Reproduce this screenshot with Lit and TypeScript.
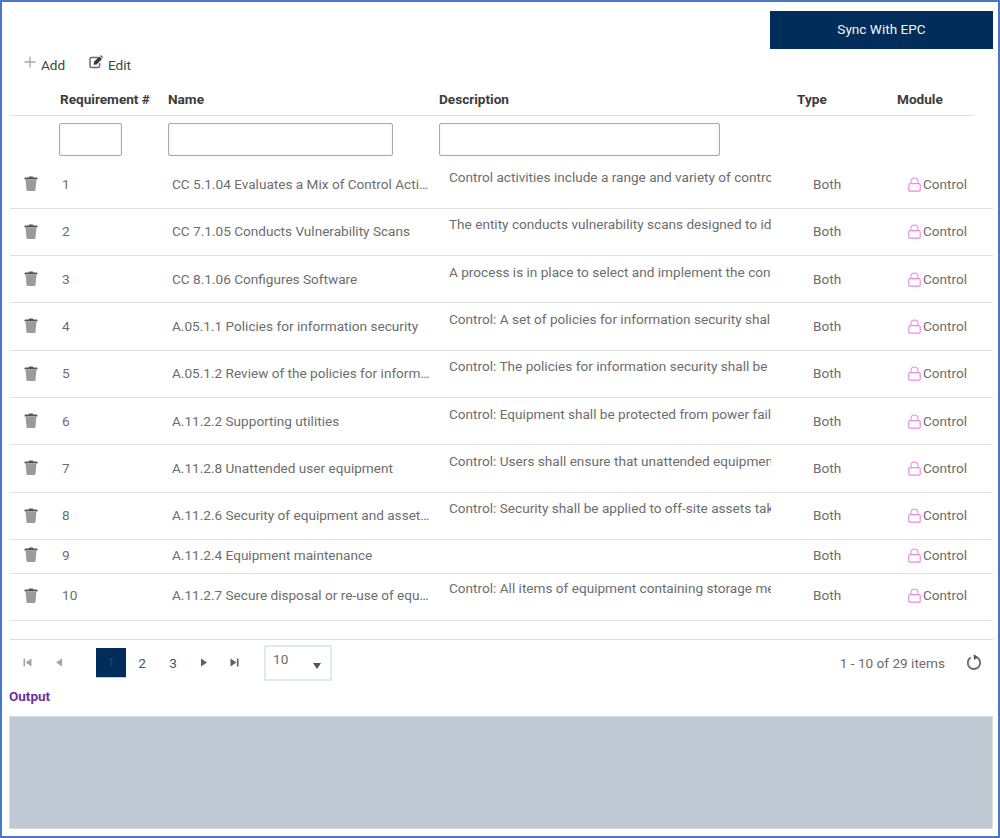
import { LitElement, html, css, svg } from "lit";
import { customElement } from "lit/decorators.js";

const rows = [
  ["1", "CC 5.1.04 Evaluates a Mix of Control Activities", "Control activities include a range and variety of controls"],
  ["2", "CC 7.1.05 Conducts Vulnerability Scans", "The entity conducts vulnerability scans designed to identify"],
  ["3", "CC 8.1.06 Configures Software", "A process is in place to select and implement the config"],
  ["4", "A.05.1.1 Policies for information security", "Control: A set of policies for information security shall"],
  ["5", "A.05.1.2 Review of the policies for information security", "Control: The policies for information security shall be"],
  ["6", "A.11.2.2 Supporting utilities", "Control: Equipment shall be protected from power failures"],
  ["7", "A.11.2.8 Unattended user equipment", "Control: Users shall ensure that unattended equipment"],
  ["8", "A.11.2.6 Security of equipment and assets off-premises", "Control: Security shall be applied to off-site assets taking"],
  ["9", "A.11.2.4 Equipment maintenance", ""],
  ["10", "A.11.2.7 Secure disposal or re-use of equipment", "Control: All items of equipment containing storage media"],
];

const trash = svg`<svg class="trash" viewBox="0 0 14 15" width="14" height="15"><path d="M0.5 2.6 Q0.5 1.6 1.6 1.6 H4.6 L5.2 0.5 H8.8 L9.4 1.6 H12.4 Q13.5 1.6 13.5 2.6 V3.4 H0.5Z" fill="#555"/><path d="M1.6 4 H12.4 L11.5 14 Q11.4 15 10.4 15 H3.6 Q2.6 15 2.5 14Z" fill="#9b9b9b"/></svg>`;
const lock = svg`<svg class="lock" viewBox="0 0 13 15" width="13" height="15"><path d="M3 7 V4.2 Q3 1 6.5 1 Q10 1 10 4.2 V7" fill="none" stroke="#ea8ae2" stroke-width="1.1"/><rect x="0.8" y="6.6" width="11.4" height="7.6" rx="1.3" fill="none" stroke="#ea8ae2" stroke-width="1.2"/></svg>`;
const first = svg`<svg viewBox="0 0 9 9" width="9" height="9"><rect x="0.5" y="0.5" width="1.6" height="8" fill="#a6a6a6"/><path d="M8.5 0.5 V8.5 L2.6 4.5Z" fill="#a6a6a6"/></svg>`;
const prev = svg`<svg viewBox="0 0 8 9" width="8" height="9"><path d="M7 0.5 V8.5 L1 4.5Z" fill="#a6a6a6"/></svg>`;
const next = svg`<svg viewBox="0 0 8 9" width="8" height="9"><path d="M1 0.5 V8.5 L7 4.5Z" fill="#5f5f5f"/></svg>`;
const last = svg`<svg viewBox="0 0 9 9" width="9" height="9"><path d="M0.5 0.5 V8.5 L6.4 4.5Z" fill="#5f5f5f"/><rect x="6.9" y="0.5" width="1.6" height="8" fill="#5f5f5f"/></svg>`;

@customElement("app-root")
export class AppRoot extends LitElement {
  static styles = css`
    :host { display: block; font-family: Roboto, "Liberation Sans", sans-serif; font-size: 13.6px; color: #6d6d6d; }
    * { box-sizing: border-box; }
    .frame { height: 838px; border: 2px solid #4a76c6; padding: 9px 5px 0 8px; overflow: hidden; display: flex; flex-direction: column; }
    .top { display: flex; justify-content: flex-end; height: 38px; }
    .sync { width: 223px; height: 38px; background: #002d59; color: #f2f5f8; display: flex; align-items: center; justify-content: center; padding-bottom: 2px; }
    .tools { display: flex; align-items: center; height: 32px; padding-left: 14px; color: #444; margin-bottom: 9px; }
    .tool { display: flex; align-items: center; }
    .add { width: 65px; gap: 5px; }
    .edit { gap: 5px; }
    .edit svg { margin-top: -7px; }
    .add svg { margin-top: -7px; }
    .head, .filters, .row { display: grid; grid-template-columns: 49px 109px 271px 358px 100px 96px; align-items: center; }
    .head { height: 26px; width: 964px; border-bottom: 1px solid #dedede; font-weight: 700; color: #3c3c3c; padding-bottom: 8px; }
    .head span:nth-child(2) { padding-left: 1px; }
    .filters { height: 45.5px; width: 964px; padding-top: 1px; padding-bottom: 0.5px; }
    input { display: block; height: 33px; border: 1px solid #a9a9a9; border-radius: 2px; background: #fff; padding: 0; outline: none; box-shadow: inset 0 0 1px #bbb; }
    .f1 { width: 63px; }
    .f2 { width: 225px; }
    .f3 { width: 281px; }
    .row { height: 47.33px; border-bottom: 1px solid #dfdfdf; padding-bottom: 1.4px; }
    .row.short { height: 34px; padding-bottom: 3.5px; }
    .row.last { padding-bottom: 4px; }
    .ico { padding-left: 14px; display: flex; }
    .num { padding-left: 3px; }
    .name { padding-left: 4px; padding-right: 8px; white-space: nowrap; overflow: hidden; text-overflow: ellipsis; }
    .desc { margin-left: 10px; width: 322px; white-space: nowrap; overflow: hidden; margin-top: -14px; }
    .type { padding-left: 16px; }
    .mod { padding-left: 11px; display: flex; align-items: center; gap: 2px; }
    .mod svg { margin-top: 1px; }
    .pager { margin-top: 17.5px; border-top: 1px solid #d3dbe3; height: 47px; display: flex; align-items: center; position: relative; }
    .pg { display: flex; align-items: center; }
    .ib { width: 31px; display: flex; justify-content: center; }
    .ib.a { margin-left: 2px; }
    .ib.b { margin-right: 22px; }
    .page { width: 31px; height: 30px; display: flex; align-items: center; justify-content: center; color: #35587c; padding-left: 1px; }
    .page.on { width: 30px; background: #002d59; color: #1d4670; border-bottom: 1px solid #c3d0dc; padding-left: 0; }
    .spacer { flex: 1; }
    .select { width: 68px; height: 36px; border: 2px solid #e1e8ee; margin-left: 14px; position: relative; padding: 4px 0 0 7px; }
    .select i { position: absolute; right: 9px; top: 16px; width: 0; height: 0; border-left: 4.5px solid transparent; border-right: 4.5px solid transparent; border-top: 6px solid #555; }
    .count { margin-right: 21px; }
    .refresh { margin-right: 11px; display: flex; }
    .out { color: #7030a0; font-weight: 700; font-size: 13.5px; margin-left: -1px; margin-top: 1px; height: 19px; line-height: 19px; margin-bottom: 10px; }
    .gray { height: 113px; margin-left: -1px; background: #bfc9d3; border: 1px solid #d6dde3; }
  `;

  render() {
    return html`<div class="frame">
      <div class="top"><div class="sync">Sync With EPC</div></div>
      <div class="tools">
        <div class="tool add">
          <svg viewBox="0 0 12 12" width="12" height="12"><path d="M6 0.5V11.5M0.5 6H11.5" stroke="#a8a8a8" stroke-width="1.3"/></svg>
          <span>Add</span>
        </div>
        <div class="tool edit">
          <svg viewBox="0 0 14 14" width="14" height="14"><path d="M9.5 2.5H2.4Q1 2.5 1 3.9V11Q1 12.4 2.4 12.4H9.2Q10.6 12.4 10.6 11V8" fill="none" stroke="#6b6b6b" stroke-width="1.5"/><path d="M5 6.8L10.4 1.4L13 4L7.6 9.4L4.6 9.8Z" fill="#3a3a3a"/><path d="M11.1 0.8L12 .2L13.9 2.1L13.5 3.2Z" fill="#3a3a3a"/></svg>
          <span>Edit</span>
        </div>
      </div>
      <div class="head"><span></span><span>Requirement #</span><span>Name</span><span>Description</span><span>Type</span><span>Module</span></div>
      <div class="filters"><span></span><span><input class="f1" /></span><span><input class="f2" /></span><span><input class="f3" /></span></div>
      ${rows.map(
        (r, i) => html`<div class="row ${i === 8 ? "short" : i === 9 ? "last" : ""}">
          <span class="ico">${trash}</span>
          <span class="num">${r[0]}</span>
          <span class="name">${r[1]}</span>
          <span class="desc">${r[2]}</span>
          <span class="type">Both</span>
          <span class="mod">${lock}<span>Control</span></span>
        </div>`
      )}
      <div class="pager">
        <div class="pg">
          <span class="ib a">${first}</span>
          <span class="ib b">${prev}</span>
          <span class="page on">1</span>
          <span class="page">2</span>
          <span class="page">3</span>
          <span class="ib">${next}</span>
          <span class="ib">${last}</span>
        </div>
        <div class="select">10<i></i></div>
        <div class="spacer"></div>
        <div class="count">1 - 10 of 29 items</div>
        <div class="refresh"><svg viewBox="0 0 16 17" width="16" height="17"><path d="M10.6 3.2A6.2 6.2 0 1 1 4.6 3.6" fill="none" stroke="#666" stroke-width="1.8"/><path d="M7.6 0L12.2 3.2L8 6Z" fill="#555"/></svg></div>
      </div>
      <div class="out">Output</div>
      <div class="gray"></div>
    </div>`;
  }
}
